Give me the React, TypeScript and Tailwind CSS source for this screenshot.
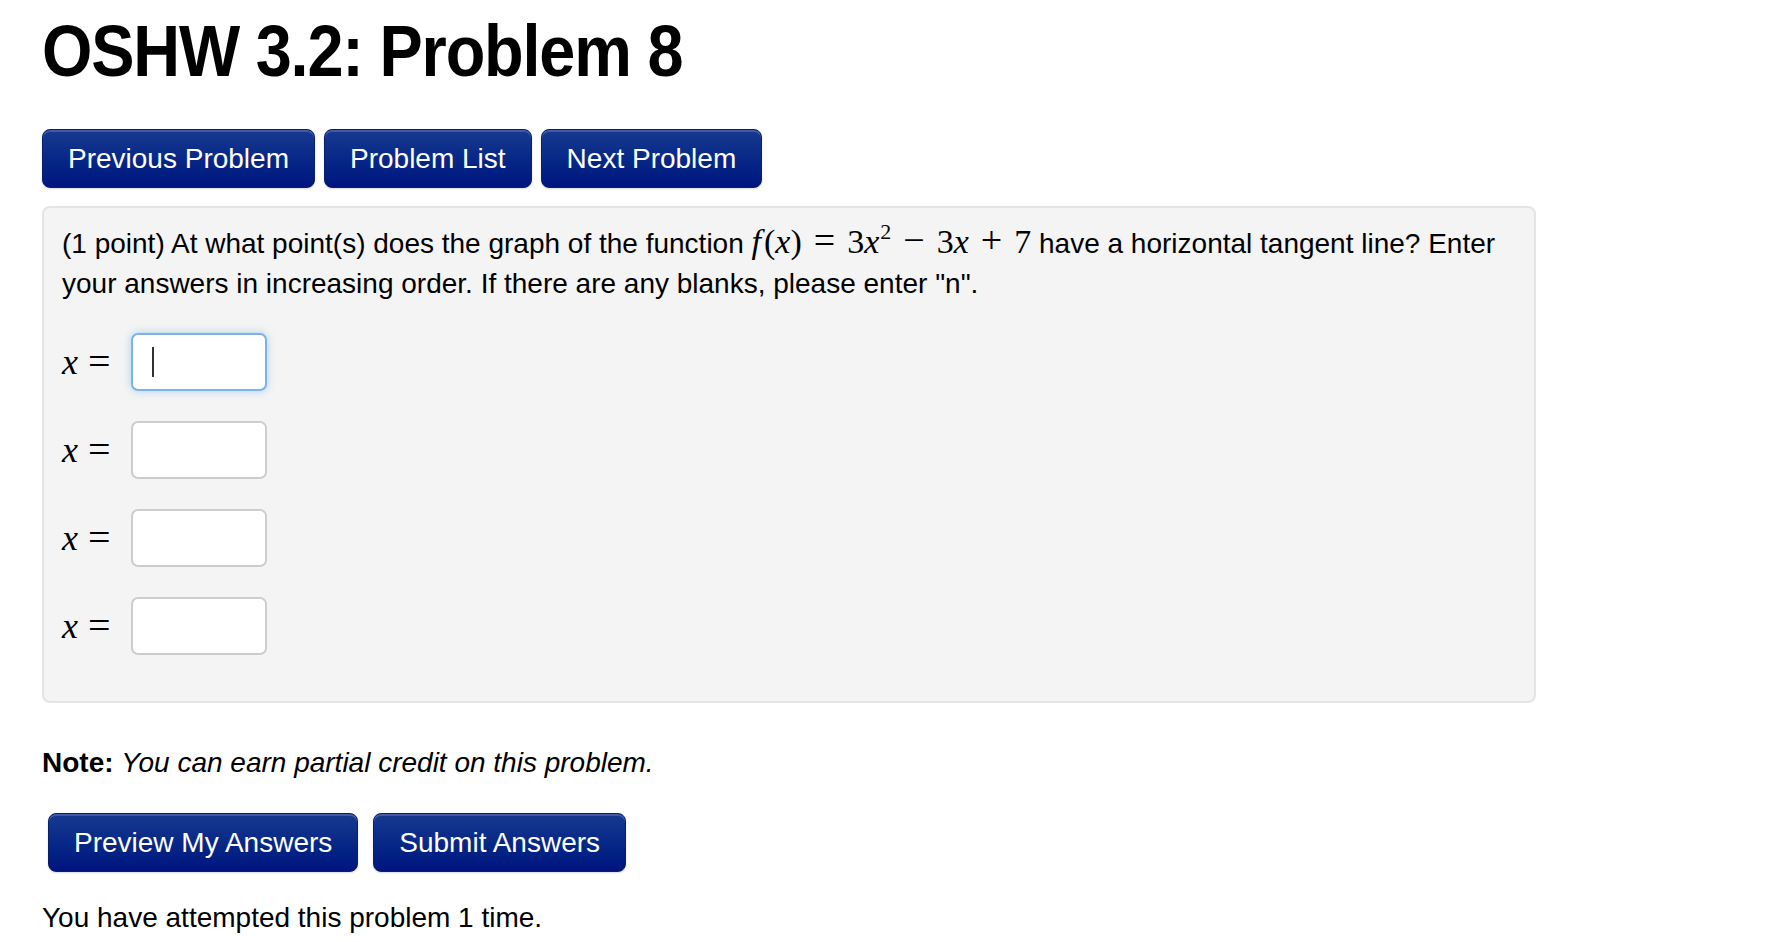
import React from 'react';

const navBtn =
    "h-[59px] px-[25px] rounded-[8px] border border-[#0a1e6e] bg-gradient-to-b from-[#17398f] to-[#00137f] text-white text-[28px] leading-none shadow-[inset_0_2px_0_rgba(255,255,255,0.18),0_1px_2px_rgba(0,0,0,0.15)]";

function Op({ children }: { children: React.ReactNode }) {
    return <span className="px-[12px] text-[38px]">{children}</span>;
}

function MathX() {
    return (
        <span className="inline-flex items-center w-[69px] font-['Liberation_Serif',serif] text-[36px] leading-none">
            <span className="italic">x</span>
            <span className="ml-[10px] text-[40px]">=</span>
        </span>
    );
}

function AnswerRow({ focused }: { focused?: boolean }) {
    return (
        <div className="flex items-center">
            <MathX />
            <div
                className={
                    focused
                        ? "w-[136px] h-[58px] rounded-[7px] border-2 border-[#7db2eb] bg-white shadow-[0_0_8px_rgba(82,168,236,0.45)] flex items-center pl-[19px]"
                        : "w-[136px] h-[58px] rounded-[7px] border-2 border-[#cdcdcd] bg-white"
                }
            >
                {focused && <span className="block w-[2px] h-[30px] bg-[#333]" />}
            </div>
        </div>
    );
}

export default function App() {
    return (
        <div className="min-h-screen bg-white pl-[42px] pt-[11px] font-['Liberation_Sans',Arial,sans-serif] text-[28px] leading-[40px] text-black">
            <h1 className="text-[72px] leading-[80px] font-bold tracking-[-1.3px] scale-x-[0.9] origin-left">OSHW 3.2: Problem 8</h1>

            <div className="mt-[38px] flex gap-[9px]">
                <button className={navBtn}>Previous Problem</button>
                <button className={navBtn}>Problem List</button>
                <button className={navBtn}>Next Problem</button>
            </div>

            <div className="mt-[18px] w-[1494px] h-[497px] rounded-[8px] border-2 border-[#e4e4e4] bg-[#f4f4f4] pl-[18px] pt-[13px] pr-[18px]">
                <p>
                    (1 point) At what point(s) does the graph of the function{' '}
                    <span className="font-['Liberation_Serif',serif] text-[34px] leading-none whitespace-nowrap">
                        <span className="italic mr-[3px]">f</span>(<span className="italic">x</span>)<Op>=</Op>3<span className="italic">x</span>
                        <sup className="text-[22px] relative -top-[14px] ml-[1px]">2</sup>
                        <Op>−</Op>3<span className="italic">x</span>
                        <Op>+</Op>7
                    </span>{' '}
                    have a horizontal tangent line? Enter your answers in increasing order. If there are any blanks, please enter "n".
                </p>
                <div className="mt-[29px] flex flex-col gap-[30px]">
                    <AnswerRow focused />
                    <AnswerRow />
                    <AnswerRow />
                    <AnswerRow />
                </div>
            </div>

            <p className="mt-[40px]">
                <span className="font-bold">Note:</span> <span className="italic">You can earn partial credit on this problem.</span>
            </p>

            <div className="mt-[30px] ml-[6px] flex gap-[15px]">
                <button className={navBtn}>Preview My Answers</button>
                <button className={navBtn}>Submit Answers</button>
            </div>

            <p className="mt-[26px]">You have attempted this problem 1 time.</p>
        </div>
    );
}
